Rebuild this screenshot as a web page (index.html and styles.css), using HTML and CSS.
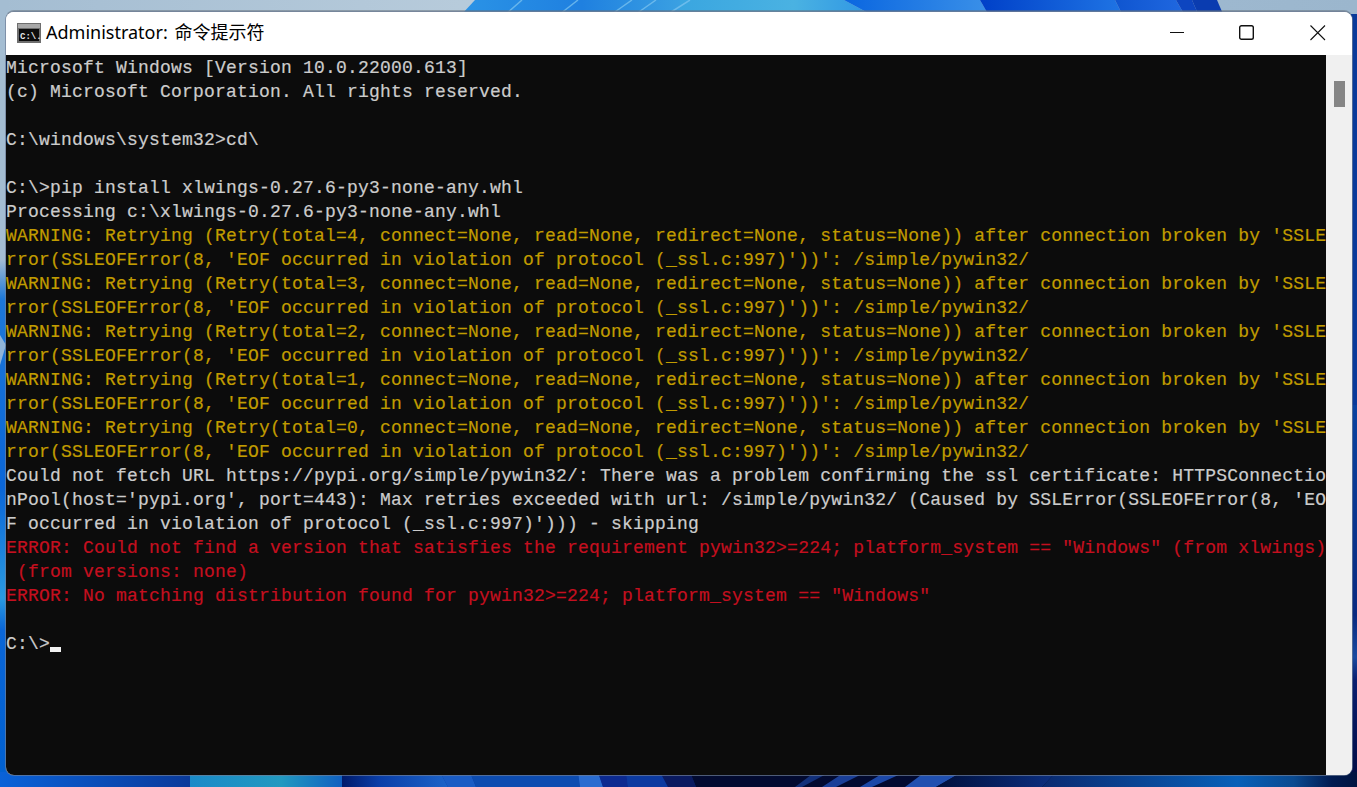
FILE: index.html
```html
<!DOCTYPE html>
<html lang="en">
<head>
<meta charset="utf-8">
<title>Administrator: 命令提示符</title>
<link rel="stylesheet" href="styles.css">
</head>
<body>
<div class="desktop">
  <svg class="wallpaper" width="1357" height="787" viewBox="0 0 1357 787" aria-hidden="true">
    <defs>
      <linearGradient id="sky" x1="0" x2="1"><stop offset="0" stop-color="#a4bdd2"/><stop offset=".34" stop-color="#b7cbdb"/><stop offset=".9" stop-color="#9db8cf"/><stop offset="1" stop-color="#9bb6cd"/></linearGradient>
      <linearGradient id="bloomA" x1="0" x2="1"><stop offset="0" stop-color="#2a93e6"/><stop offset=".55" stop-color="#1f80e0"/><stop offset="1" stop-color="#3aa0e2"/></linearGradient>
      <linearGradient id="bloomB" x1="0" x2="1"><stop offset="0" stop-color="#3aa6e0"/><stop offset=".6" stop-color="#4ab2e2"/><stop offset="1" stop-color="#2f96e4"/></linearGradient>
      <linearGradient id="bloomC" x1="0" x2="1"><stop offset="0" stop-color="#0a66e0"/><stop offset="1" stop-color="#3a90e8"/></linearGradient>
      <linearGradient id="bloomD" x1="0" x2="1"><stop offset="0" stop-color="#0040c8"/><stop offset="1" stop-color="#1f74e4"/></linearGradient>
      <linearGradient id="bloomE" x1="0" x2="1"><stop offset="0" stop-color="#0f55d0"/><stop offset="1" stop-color="#2068e0"/></linearGradient>
      <linearGradient id="lower1" x1="0" x2="1"><stop offset="0" stop-color="#0a62d8"/><stop offset="1" stop-color="#0a3a9a"/></linearGradient>
      <linearGradient id="lower2" x1="0" x2="1"><stop offset="0" stop-color="#1a8ac8"/><stop offset=".6" stop-color="#2299c0"/><stop offset="1" stop-color="#1060c0"/></linearGradient>
      <linearGradient id="lower3" x1="0" x2="1"><stop offset="0" stop-color="#001a6a"/><stop offset=".35" stop-color="#0a3ea8"/><stop offset="1" stop-color="#1c63c8"/></linearGradient>
      <linearGradient id="lower4" x1="0" x2="1"><stop offset="0" stop-color="#00103c"/><stop offset="1" stop-color="#0c2f80"/></linearGradient>
      <linearGradient id="lower5" x1="0" x2="1"><stop offset="0" stop-color="#0a2a70"/><stop offset=".62" stop-color="#0860b8"/><stop offset=".8" stop-color="#0a4a90"/><stop offset=".92" stop-color="#001a50"/><stop offset="1" stop-color="#001440"/></linearGradient>
      <linearGradient id="leftEdge" x1="0" x2="0" y1="0" y2="1"><stop offset="0" stop-color="#a4bdd2"/><stop offset=".33" stop-color="#a4bdd2"/><stop offset=".38" stop-color="#1d78d8"/><stop offset=".62" stop-color="#0a66d8"/><stop offset=".76" stop-color="#2a9ae0"/><stop offset=".8" stop-color="#0a66d8"/><stop offset="1" stop-color="#0060d0"/></linearGradient>
      <linearGradient id="rightEdge" x1="0" x2="0" y1="0" y2="1"><stop offset="0" stop-color="#0a42a0"/><stop offset=".55" stop-color="#0a2a80"/><stop offset=".66" stop-color="#1a4aa0"/><stop offset=".72" stop-color="#0a1f70"/><stop offset="1" stop-color="#000a40"/></linearGradient>
    </defs>
    <rect class="wall-base" width="1357" height="787"/>
    <rect x="0" y="0" width="1357" height="14" fill="url(#sky)"/>
    <polygon points="475,0 680,0 680,14 462,14" fill="url(#bloomA)"/>
    <polygon points="680,0 844,0 870,14 680,14" fill="url(#bloomB)"/>
    <polygon points="844,0 980,0 988,14 870,14" fill="url(#bloomC)"/>
    <polygon points="980,0 1115,0 1122,14 988,14" fill="url(#bloomD)"/>
    <polygon points="1115,0 1176,0 1184,14 1122,14" fill="url(#bloomE)"/>
    <polygon points="1176,0 1192,0 1198,14 1184,14" fill="#0d45c0"/>
    <polygon points="1192,0 1217,0 1223,14 1198,14" fill="#0a3cb0"/>
    <g class="streaks">
      <line x1="522" y1="0" x2="506" y2="14"/><line x1="578" y1="0" x2="560" y2="14"/>
      <line x1="632" y1="0" x2="612" y2="14"/><line x1="656" y1="0" x2="636" y2="14"/>
      <line x1="690" y1="0" x2="668" y2="14"/>
    </g>
    <rect x="0" y="0" width="8" height="787" fill="url(#leftEdge)"/>
    <polygon points="0,335 6,345 0,365" fill="#8fb4d8"/>
    <rect x="1349" y="405" width="8" height="382" fill="url(#rightEdge)"/>
    <rect x="0" y="772" width="190" height="15" fill="url(#lower1)"/>
    <rect x="190" y="772" width="152" height="15" fill="url(#lower2)"/>
    <polygon points="342,772 440,772 448,787 342,787" fill="url(#lower3)"/>
    <polygon points="440,772 470,772 476,787 448,787" fill="#1a5cc4"/>
    <polygon points="470,772 578,772 580,787 476,787" fill="#0d4cb0"/>
    <polygon points="578,772 598,772 603,787 580,787" fill="#2a6cd0"/>
    <polygon points="598,772 626,772 628,787 603,787" fill="#0c2a90"/>
    <polygon points="626,772 660,772 668,787 628,787" fill="#0c3aa0"/>
    <polygon points="660,772 690,772 696,787 668,787" fill="#0a1a60"/>
    <polygon points="690,772 1357,772 1357,787 696,787" fill="#020a30"/>
    <polygon points="815,772 830,772 802,787 795,787" fill="#12307a"/>
    <polygon points="845,772 866,772 836,787 822,787" fill="#1a3f98"/>
    <polygon points="885,772 905,772 872,787 860,787" fill="#1c48a8"/>
    <polygon points="925,772 962,772 936,787 905,787" fill="#2050b0"/>
    <polygon points="962,772 1056,772 1042,787 936,787" fill="url(#lower4)"/>
    <polygon points="1056,772 1357,772 1357,787 1042,787" fill="url(#lower5)"/>
  </svg>

  <main class="window">
    <header class="titlebar">
      <svg class="app-icon" width="24" height="20" viewBox="0 0 24 20" aria-hidden="true">
        <rect class="icon-frame" width="24" height="20"/>
        <rect class="icon-bar" x="1" y="1" width="22" height="4"/>
        <rect class="icon-body" x="2" y="6" width="20" height="12"/>
        <text class="icon-text" x="3" y="15.5">C:\.</text>
      </svg>
      <h1 class="title"><span class="title-latin">Administrator:</span> 命令提示符</h1>
      <div class="controls">
        <button class="control" aria-label="Minimize">
          <svg width="16" height="16" viewBox="0 0 16 16"><line class="glyph" x1="2" y1="7.5" x2="16" y2="7.5"/></svg>
        </button>
        <button class="control" aria-label="Maximize">
          <svg width="16" height="16" viewBox="0 0 16 16"><rect class="glyph glyph-max" x="0.7" y="0.7" width="13.6" height="13.6" rx="1.8"/></svg>
        </button>
        <button class="control" aria-label="Close">
          <svg width="16" height="16" viewBox="0 0 16 16"><path class="glyph" d="M0.5 0.5 15 15M15 0.5 0.5 15"/></svg>
        </button>
      </div>
    </header>
    <div class="body">
<pre class="console">Microsoft Windows [Version 10.0.22000.613]
(c) Microsoft Corporation. All rights reserved.

C:\windows\system32&gt;cd\

C:\&gt;pip install xlwings-0.27.6-py3-none-any.whl
Processing c:\xlwings-0.27.6-py3-none-any.whl
<span class="warn">WARNING: Retrying (Retry(total=4, connect=None, read=None, redirect=None, status=None)) after connection broken by 'SSLE
rror(SSLEOFError(8, 'EOF occurred in violation of protocol (_ssl.c:997)'))': /simple/pywin32/
WARNING: Retrying (Retry(total=3, connect=None, read=None, redirect=None, status=None)) after connection broken by 'SSLE
rror(SSLEOFError(8, 'EOF occurred in violation of protocol (_ssl.c:997)'))': /simple/pywin32/
WARNING: Retrying (Retry(total=2, connect=None, read=None, redirect=None, status=None)) after connection broken by 'SSLE
rror(SSLEOFError(8, 'EOF occurred in violation of protocol (_ssl.c:997)'))': /simple/pywin32/
WARNING: Retrying (Retry(total=1, connect=None, read=None, redirect=None, status=None)) after connection broken by 'SSLE
rror(SSLEOFError(8, 'EOF occurred in violation of protocol (_ssl.c:997)'))': /simple/pywin32/
WARNING: Retrying (Retry(total=0, connect=None, read=None, redirect=None, status=None)) after connection broken by 'SSLE
rror(SSLEOFError(8, 'EOF occurred in violation of protocol (_ssl.c:997)'))': /simple/pywin32/</span>
Could not fetch URL https://pypi.org/simple/pywin32/: There was a problem confirming the ssl certificate: HTTPSConnectio
nPool(host='pypi.org', port=443): Max retries exceeded with url: /simple/pywin32/ (Caused by SSLError(SSLEOFError(8, 'EO
F occurred in violation of protocol (_ssl.c:997)'))) - skipping
<span class="err">ERROR: Could not find a version that satisfies the requirement pywin32&gt;=224; platform_system == "Windows" (from xlwings)
 (from versions: none)
ERROR: No matching distribution found for pywin32&gt;=224; platform_system == "Windows"</span>

C:\&gt;<span class="cursor"></span></pre>
      <div class="scrollbar"><div class="thumb"></div></div>
    </div>
  </main>
</div>
</body>
</html>
```

FILE: styles.css
```css
html, body {
  margin: 0;
  padding: 0;
  overflow: hidden;
}

.desktop {
  position: relative;
  box-sizing: border-box;
  width: 1357px;
  height: 787px;
  padding: 12px 5px 12px 6px;
  display: flex;
}

.wallpaper {
  position: absolute;
  inset: 0;
}

.wall-base { fill: #0a3a9a; }

.streaks line {
  stroke: #7cc4f0;
  stroke-width: 1.5;
  opacity: .75;
}

.window {
  position: relative;
  flex: 1;
  display: flex;
  flex-direction: column;
  border-radius: 8px;
  overflow: hidden;
  background: #fff;
  box-shadow: 0 0 0 1px rgba(110, 125, 150, .7), 0 -2px 0 0 rgba(100, 110, 120, .5);
}

.titlebar {
  box-sizing: border-box;
  height: 43px;
  flex: none;
  display: flex;
  align-items: center;
  padding: 0 0 2px 11px;
  background: #fff;
}

.app-icon { flex: none; }

.icon-frame { fill: #6e6e6e; }
.icon-bar { fill: #a8a8a8; }
.icon-body { fill: #0c0c0c; }

.icon-text {
  font: bold 9px "Liberation Mono", monospace;
  fill: #e6e6e6;
}

.title {
  margin: 0 0 4px 5px;
  font: 400 18px "Noto Sans", "Noto Sans CJK SC", sans-serif;
  color: #000;
  white-space: pre;
  word-spacing: 2px;
}

.controls {
  margin-left: auto;
  display: flex;
  height: 100%;
  align-items: center;
  gap: 55px;
  padding-right: 26px;
}

.control {
  width: 16px;
  height: 16px;
  padding: 0;
  border: 0;
  background: none;
  display: block;
}

.control svg { display: block; }

.glyph {
  fill: none;
  stroke: #111;
  stroke-width: 1.1;
}

.glyph-max { stroke-width: 1.4; }

.body {
  flex: 1;
  display: flex;
  min-height: 0;
}

.console {
  flex: 1;
  margin: 0;
  padding: 1px 0 0;
  background: #0c0c0c;
  color: #cccccc;
  font: 18px/24px "Liberation Mono", monospace;
  letter-spacing: .2px;
  -webkit-text-stroke: .2px currentColor;
  overflow: hidden;
  white-space: pre;
}

.warn { color: #c19c00; }
.err { color: #c50f1f; }

.cursor {
  display: inline-block;
  width: 11px;
  height: 5px;
  background: #f2f2f2;
  vertical-align: -3px;
}

.scrollbar {
  flex: none;
  width: 26px;
  box-sizing: border-box;
  padding: 26px 7px 0 8px;
  background: #f0f0f0;
}

.thumb {
  height: 26px;
  background: #858585;
}
```
